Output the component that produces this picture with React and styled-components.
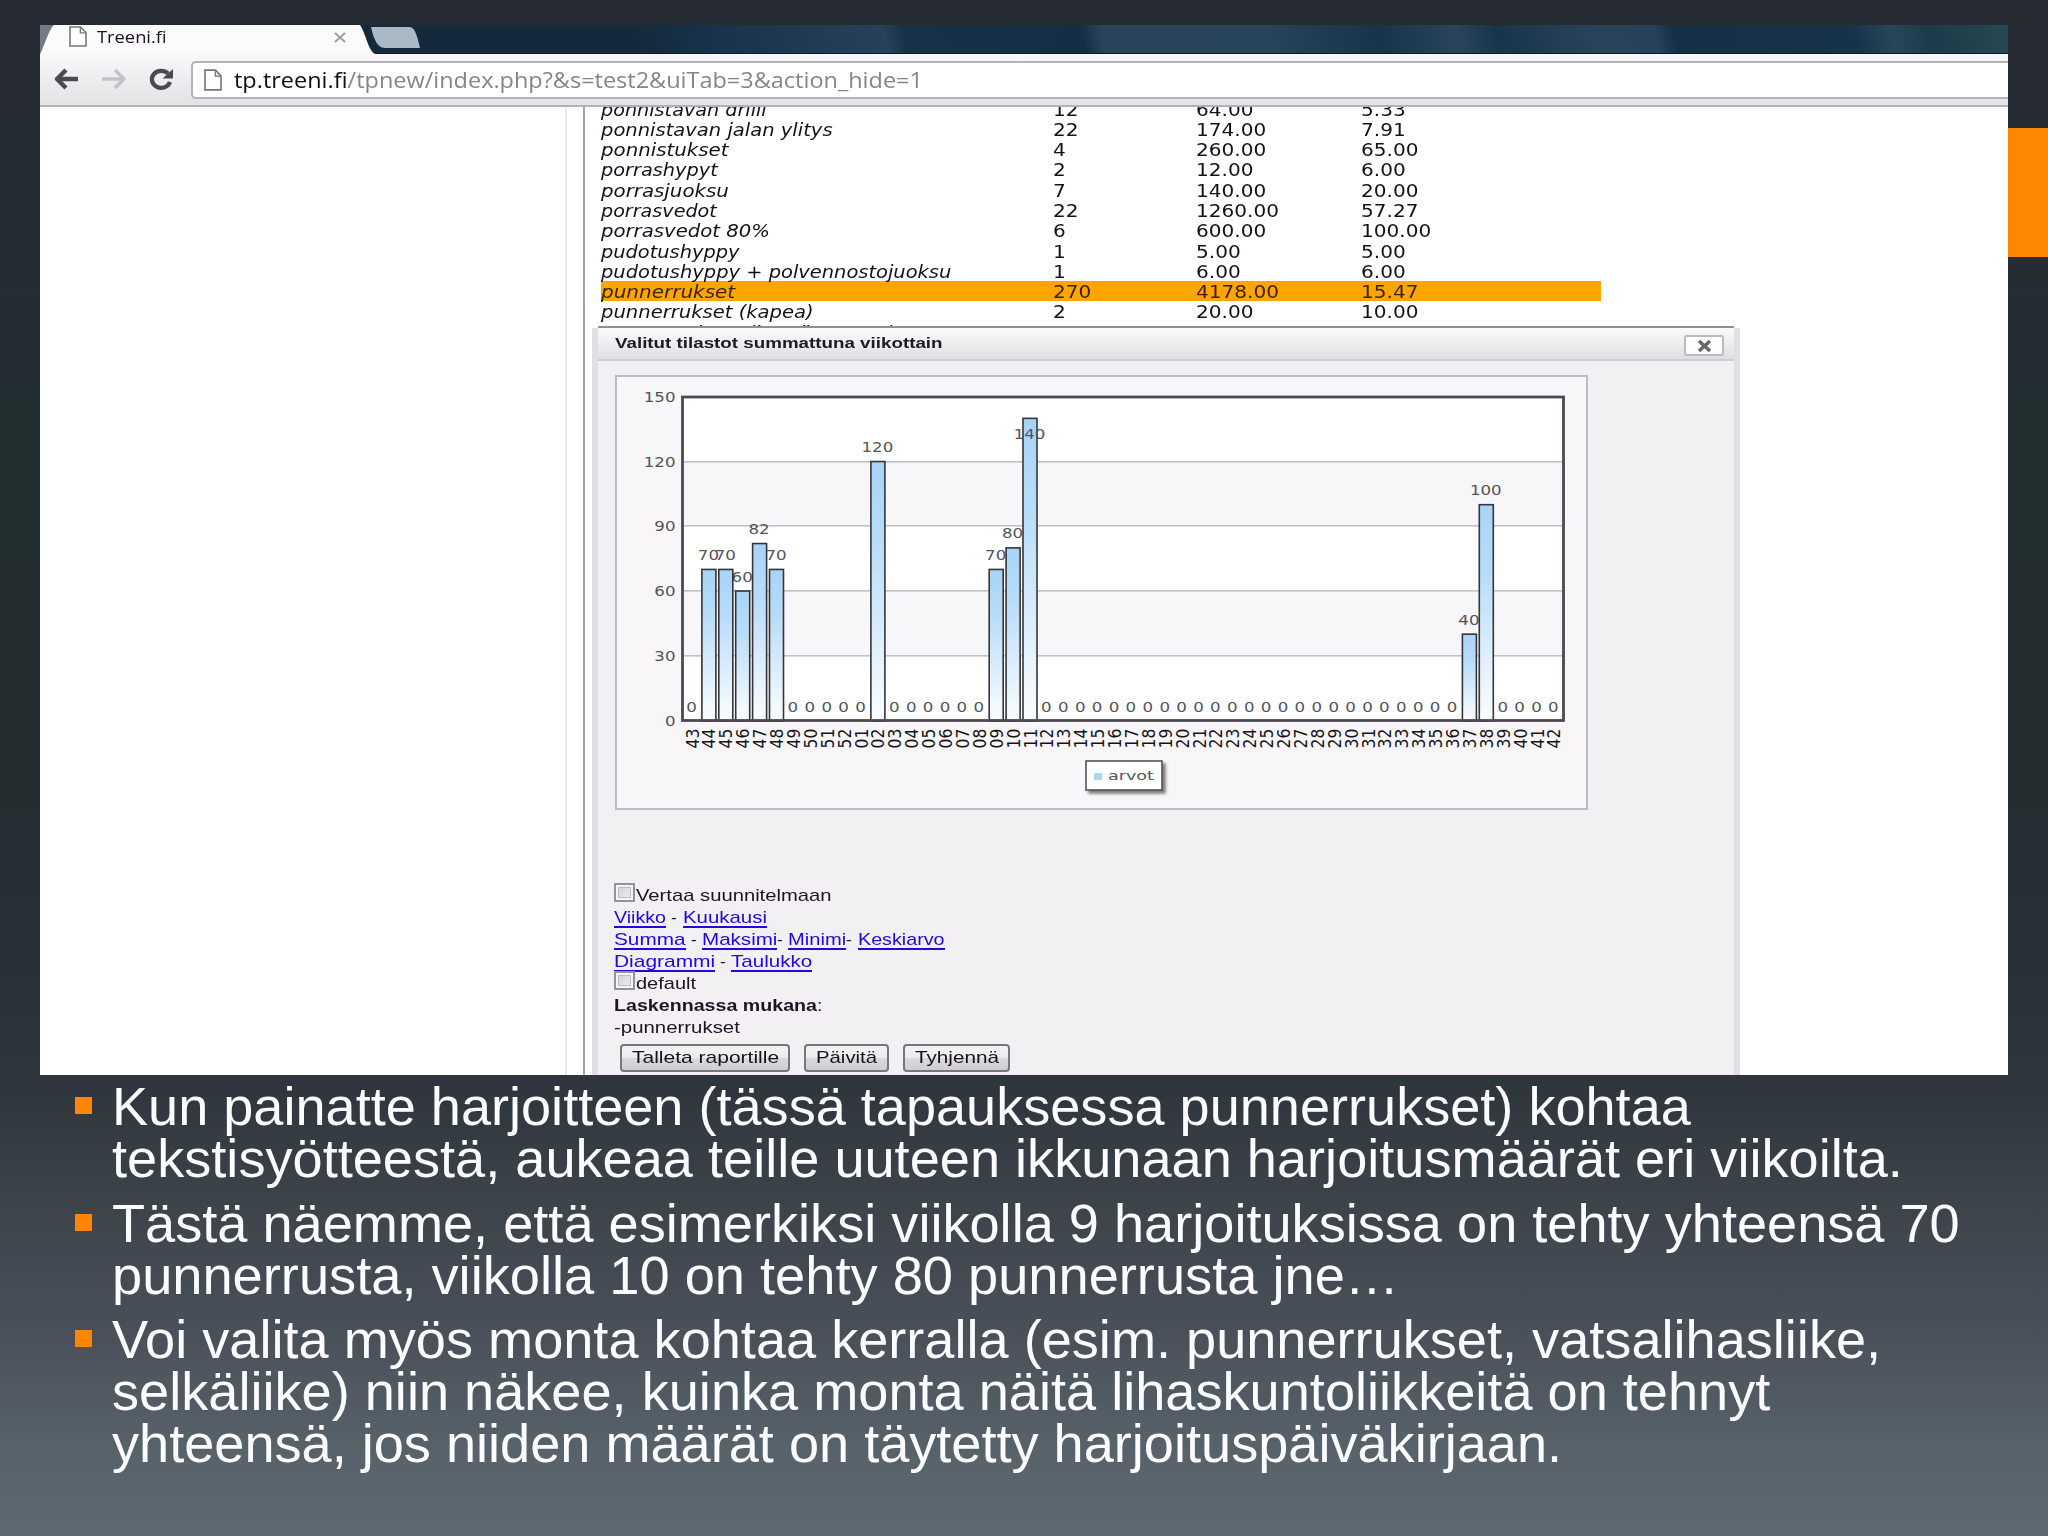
import React, { useLayoutEffect, useRef, useState } from "react";
import styled, { createGlobalStyle } from "styled-components";

const GlobalStyle = createGlobalStyle`
  * { box-sizing: border-box; }
  html, body { margin: 0; padding: 0; }
  body { width: 2048px; height: 1536px; overflow: hidden; }
`;

const ARIAL = `"Liberation Sans", Arial, sans-serif`;
const VERDANA = `"DejaVu Sans", Verdana, sans-serif`;
const SEGOE = `"Open Sans", "Noto Sans", sans-serif`;

/* Text stretched horizontally to a known width. */
const FitBox = styled.span`
  display: inline-block;
  flex: none;
  width: ${(p) => p.$w}px;
  white-space: pre;
  text-align: left;
`;
const FitInner = styled.span`
  display: inline-block;
  transform-origin: 0 50%;
`;

function Fit({ w, children }) {
  const ref = useRef(null);
  const [k, setK] = useState(1);
  useLayoutEffect(() => {
    setK(w / ref.current.offsetWidth);
  }, [w]);
  return (
    <FitBox $w={w}>
      <FitInner ref={ref} style={{ transform: `scaleX(${k})` }}>{children}</FitInner>
    </FitBox>
  );
}

const Slide = styled.main`
  position: relative;
  width: 2048px;
  height: 1536px;
  padding: 25px 40px 0;
  background: linear-gradient(180deg, #262b33 0px, #262b33 100px, #242d33 230px, #232e31 420px, #242e31 800px, #293036 960px, #2f363d 1090px, #3d434b 1200px, #4b515b 1340px, #56616a 1440px, #5f6973 1536px);
  overflow: hidden;
`;

const AccentTab = styled.div`
  position: absolute;
  left: 2008px;
  top: 128px;
  width: 40px;
  height: 129px;
  background: #ff8600;
`;

const Browser = styled.section`
  width: 1968px;
  height: 1050px;
  display: flex;
  flex-direction: column;
  background: #fff;
  overflow: hidden;
`;

const TabStrip = styled.div`
  height: 29px;
  flex: none;
  display: flex;
  background: linear-gradient(76deg, #14293b 0 30%, #17324a 34%, #28415a 43%, #183148 44%, #142e45 53%, #2a445b 54%, #29455b 62%, #17344a 68%, #2a455b 72%, #17354b 74%, #2b435a 79%, #28405a 82%, #162f46 83%, #17334a 92%, #28465a 94%, #1b3b49 96%, #264951 100%);
  border-bottom: 1px solid #0c1a26;
  position: relative;
`;

const TabShapes = styled.svg`
  position: absolute;
  left: 0;
  top: 0;
`;

const TabContent = styled.div`
  position: relative;
  display: flex;
  width: 340px;
  height: 29px;
  padding: 1px 34px 0 29px;
  align-items: flex-start;
  font: 17px/21px ${SEGOE};
  color: #1b1022;
`;
const TabTitle = styled.span`
  margin-left: 10px;
  flex: 1;
`;
const TabClose = styled.svg`
  margin-top: 6px;
`;

const Toolbar = styled.div`
  height: 53px;
  flex: none;
  display: flex;
  align-items: flex-start;
  padding: 7px 0 0 14px;
  background: linear-gradient(#f8f8fa, #e3e3e5);
  border-bottom: 2px solid #b2b2b6;
`;
const NavIcon = styled.svg`
  flex: none;
  margin: 6px ${(p) => p.$gap}px 0 0;
`;
const AddressBar = styled.div`
  flex: 1;
  height: 38px;
  display: flex;
  align-items: center;
  padding-left: 11px;
  background: #fff;
  border: 2px solid #b4b4b8;
  border-right: 0;
  border-radius: 5px 0 0 5px;
  font: 21.5px/34px ${SEGOE};
  color: #85858a;
`;
const Url = styled.span`
  margin-left: 12px;
  height: 34px;
  b { color: #101010; font-weight: 400; }
`;

const Page = styled.div`
  flex: 1;
  display: flex;
  overflow: hidden;
`;
const Gutter = styled.div`
  width: 527px;
  flex: none;
  border-right: 2px solid #ececf0;
`;
const Spacer = styled.div`
  width: 16px;
  flex: none;
`;
const Content = styled.div`
  position: relative;
  flex: 1;
  border-left: 2px solid #a3a3a7;
`;

const Table = styled.div`
  margin: -8.5px 0 0 16px;
  width: 1000px;
  font: 17px/20.3px ${VERDANA};
  color: #14101c;
`;
const Row = styled.div`
  display: grid;
  grid-template-columns: 452px 143px 165px 1fr;
  height: 20.3px;
  background: ${(p) => (p.$on ? "#ffa500" : "transparent")};
  color: ${(p) => (p.$on ? "#3a2205" : "inherit")};
  line-height: 22.3px;
  em { font-style: italic; }
`;
const Stretch = styled.span`
  display: block;
  transform: scaleX(1.18);
  transform-origin: 0 50%;
  white-space: nowrap;
`;

const Dialog = styled.div`
  position: absolute;
  left: 7px;
  top: 219px;
  width: 1148px;
  height: 760px;
  padding: 0 6px;
  background: linear-gradient(#fff 0 2px, #e0dfe3 2px);
`;
const DialogBody = styled.div`
  height: 760px;
  background: #f2f0f3;
`;
const DialogHead = styled.div`
  height: 35px;
  display: flex;
  align-items: flex-start;
  justify-content: space-between;
  padding: 6px 10px 0 17px;
  border-top: 2px solid #8f8f95;
  border-bottom: 2px solid #cdccd0;
  background: linear-gradient(#fbfbfc, #dfdee2);
  font: bold 15.5px/17px ${ARIAL};
  color: #1b1b22;
`;
const CloseButton = styled.button`
  width: 40px;
  height: 21px;
  margin-top: 1px;
  padding: 0;
  display: flex;
  align-items: center;
  justify-content: center;
  background: #fdfdfe;
  border: 2px solid #b9b9bf;
  border-radius: 3px;
`;
const ChartFrame = styled.div`
  margin: 14px 0 0 17px;
  width: 973px;
  height: 435px;
  border: 2px solid #bdbdc1;
  background: #f8f6f9;
`;
const Chart = styled.svg`
  display: block;
  margin: -2px;
`;

const Controls = styled.div`
  margin: 73px 0 0 16px;
  font: 17px/22px ${ARIAL};
  color: #1d1526;
`;
const Line = styled.div`
  display: flex;
  height: 22px;
  align-items: flex-start;
  line-height: 26px;
`;
const Gap = styled.span`
  flex: none;
  width: ${(p) => p.$w}px;
  padding-left: ${(p) => p.$in || 0}px;
`;
const Link = styled.a`
  color: #2208dd;
  border-bottom: 2px solid #2208dd;
  height: 23px;
`;
const Check = styled.span`
  flex: none;
  width: 21px;
  height: 19px;
  margin-right: 1px;
  border: 2px solid #939399;
  background: linear-gradient(135deg, #cbcdd2, #f4f4f5);
  box-shadow: inset 0 0 0 2px #f5f5f6, inset 0 0 0 3px #bbbdc2;
`;
const Buttons = styled.div`
  display: flex;
  gap: 14px;
  margin: 7px 0 0 6px;
`;
const Button = styled.button`
  width: ${(p) => p.$w}px;
  height: 28px;
  padding: 0;
  border: 2px solid #77777b;
  border-radius: 4px;
  background: linear-gradient(#f3f3f4 0, #ececee 48%, #d9d9dc 52%, #cfcfd3 100%);
  font: 17px/24px ${ARIAL};
  color: #1a1020;
`;

const Bullets = styled.ul`
  list-style: none;
  margin: 6px 0 0;
  padding: 0;
  font: 53px/52px ${ARIAL};
  color: #fafcff;
`;
const Bullet = styled.li`
  display: flex;
  gap: 20px;
  padding-left: 35px;
  margin-bottom: 12.6px;
`;
const Marker = styled.i`
  flex: none;
  width: 17px;
  height: 17px;
  margin-top: 16px;
  background: #ff8600;
`;
const Lines = styled.div`
  display: flex;
  flex-direction: column;
`;

const rows = [
  ["ponnistavan drilli", 166, "12", "64.00", "5.33"],
  ["ponnistavan jalan ylitys", 232, "22", "174.00", "7.91"],
  ["ponnistukset", 128, "4", "260.00", "65.00"],
  ["porrashypyt", 117, "2", "12.00", "6.00"],
  ["porrasjuoksu", 128, "7", "140.00", "20.00"],
  ["porrasvedot", 116, "22", "1260.00", "57.27"],
  ["porrasvedot 80%", 169, "6", "600.00", "100.00"],
  ["pudotushyppy", 139, "1", "5.00", "5.00"],
  ["pudotushyppy + polvennostojuoksu", 350, "1", "6.00", "6.00"],
  ["punnerrukset", 134, "270", "4178.00", "15.47"],
  ["punnerrukset (kapea)", 213, "2", "20.00", "10.00"],
  ["punnerrukset (leveä asento)", 295, "", "", ""],
];

const weeks = [];
for (let w = 43; w <= 52; w++) weeks.push(w);
for (let w = 1; w <= 42; w++) weeks.push(w);
const totals = { 44: 70, 45: 70, 46: 60, 47: 82, 48: 70, 2: 120, 9: 70, 10: 80, 11: 140, 37: 40, 38: 100 };

const X0 = 615;
const Y0 = 375;
const xOf = (i) => 692 - X0 + i * 16.9;
const yOf = (v) => 720.5 - Y0 - v * 2.158;

function WeekChart() {
  const bars = weeks.map((w, i) => ({ w, i, v: totals[w] || 0 }));
  const label = (b) => (
    <text
      key={"l" + b.w}
      transform={`translate(${xOf(b.i) - 0.5} ${b.v === 140 ? 64 : b.v ? yOf(b.v) - 9.5 : 337}) scale(1.25 1)`}
      textAnchor="middle"
      fontSize="13.3"
      fill="#55535a"
    >
      {b.v}
    </text>
  );
  return (
    <Chart width="973" height="435" viewBox="0 0 973 435" fontFamily={VERDANA}>
      <defs>
        <linearGradient id="bar" x1="0" y1="0" x2="0" y2="1">
          <stop offset="0" stopColor="#a9d4f6" />
          <stop offset="0.3" stopColor="#b7dcf8" />
          <stop offset="1" stopColor="#fcfdff" />
        </linearGradient>
        <filter id="shade" x="-20%" y="-20%" width="150%" height="160%">
          <feDropShadow dx="3" dy="3" stdDeviation="1.5" floodColor="#555" floodOpacity="0.75" />
        </filter>
      </defs>
      <rect x="67" y="22" width="881" height="323" fill="#fff" />
      <rect x="67" y={yOf(120)} width="881" height="64" fill="#f7f6f9" />
      <rect x="67" y={yOf(60)} width="881" height="65" fill="#f7f6f9" />
      {[120, 90, 60, 30].map((v) => (
        <rect key={v} x="67" y={Math.round(yOf(v)) - 1} width="881" height="1.6" fill="#c3c2c6" />
      ))}
      {[150, 120, 90, 60, 30, 0].map((v) => (
        <text
          key={v}
          transform={`translate(60.5 ${yOf(v) + 5}) scale(1.25 1)`}
          textAnchor="end"
          fontSize="13.3"
          fill="#55535a"
        >
          {v}
        </text>
      ))}
      {bars.filter((b) => b.v !== 140).map(label)}
      {bars.filter((b) => b.v).map((b) => (
        <rect
          key={b.w}
          x={xOf(b.i) - 7}
          y={yOf(b.v)}
          width="14"
          height={346 - yOf(b.v)}
          fill="url(#bar)"
          stroke="#35353a"
          strokeWidth="1.6"
        />
      ))}
      {bars.filter((b) => b.v === 140).map(label)}
      <rect x="67.5" y="22" width="881" height="323.5" fill="none" stroke="#4c4a50" strokeWidth="2.8" />
      {bars.map((b) => (
        <text
          key={b.w}
          transform={`translate(${xOf(b.i) + 6.5} 373.5) rotate(-90) scale(1 1.13)`}
          fontSize="15.6"
          fill="#141418"
        >
          {String(b.w).padStart(2, "0")}
        </text>
      ))}
      <rect x="471" y="386" width="76" height="29" fill="#fff" stroke="#55535a" strokeWidth="1.6" filter="url(#shade)" />
      <rect x="479" y="398" width="8" height="7" fill="#a9d6f7" />
      <text x="493" y="405" fontSize="13" fill="#55535a" textLength="46" lengthAdjust="spacingAndGlyphs">
        arvot
      </text>
    </Chart>
  );
}

const FileSvg = styled.svg`
  flex: none;
`;
const FileIcon = ({ w = 18, h = 21 }) => (
  <FileSvg width={w} height={h} viewBox="0 0 18 21" preserveAspectRatio="none">
    <path d="M1 1H11.5L17 6.5V20H1Z" fill="#fff" stroke="#77777b" strokeWidth="1.6" />
    <path d="M11.3 1V6.8H17" fill="none" stroke="#77777b" strokeWidth="1.3" />
  </FileSvg>
);

const bullets = [
  [
    ["Kun painatte harjoitteen (tässä tapauksessa punnerrukset) kohtaa", 1579],
    ["tekstisyötteestä, aukeaa teille uuteen ikkunaan harjoitusmäärät eri viikoilta.", 1791],
  ],
  [
    ["Tästä näemme, että esimerkiksi viikolla 9 harjoituksissa on tehty yhteensä 70", 1848],
    ["punnerrusta, viikolla 10 on tehty 80 punnerrusta jne…", 1287],
  ],
  [
    ["Voi valita myös monta kohtaa kerralla (esim. punnerrukset, vatsalihasliike,", 1769],
    ["selkäliike) niin näkee, kuinka monta näitä lihaskuntoliikkeitä on tehnyt", 1658],
    ["yhteensä, jos niiden määrät on täytetty harjoituspäiväkirjaan.", 1450],
  ],
];

export default function App() {
  return (
    <>
      <GlobalStyle />
      <Slide>
        <Browser>
          <TabStrip>
            <TabShapes width="400" height="29" viewBox="0 0 400 29">
              <path d="M0 0H14L0 29Z" fill="#6f7b85" />
              <path d="M0 29C4 22 9 4 14 0H320C325 6 329 29 336 29Z" fill="#fbfbfc" />
              <path d="M331 2H370C376 3 378 15 380 23H345C336 23 333 10 331 2Z" fill="#a9b9c5" />
            </TabShapes>
            <TabContent>
              <FileIcon />
              <TabTitle>
                <Fit w={70}>Treeni.fi</Fit>
              </TabTitle>
              <TabClose width="12" height="11" viewBox="0 0 12 11">
                <path d="M1 1L11 10M11 1L1 10" stroke="#a0a0a4" strokeWidth="2" />
              </TabClose>
            </TabContent>
          </TabStrip>
          <Toolbar>
            <NavIcon $gap={21} width="26" height="24" viewBox="0 0 26 24">
              <path d="M12 3L3 12L12 21M4 12H24" fill="none" stroke="#4b4b4f" strokeWidth="4.4" strokeLinejoin="round" />
            </NavIcon>
            <NavIcon $gap={21} width="26" height="24" viewBox="0 0 26 24">
              <path d="M14 3L23 12L14 21M22 12H1" fill="none" stroke="#c3c3c7" strokeWidth="3.6" strokeLinejoin="round" />
            </NavIcon>
            <NavIcon $gap={17} width="26" height="24" viewBox="0 0 26 24">
              <path d="M20 6.5A9.3 8.5 0 1 0 22 15" fill="none" stroke="#4b4b4f" strokeWidth="4.2" />
              <path d="M25 2V11.5H14.5Z" fill="#4b4b4f" />
            </NavIcon>
            <AddressBar>
              <FileIcon h={22} />
              <Url>
                <Fit w={689}>
                  <b>tp.treeni.fi</b>/tpnew/index.php?&amp;s=test2&amp;uiTab=3&amp;action_hide=1
                </Fit>
              </Url>
            </AddressBar>
          </Toolbar>
          <Page>
            <Gutter />
            <Spacer />
            <Content>
              <Table>
                {rows.map(([name, w, a, b, c]) => (
                  <Row key={name} $on={name === "punnerrukset"}>
                    <Fit w={w}>
                      <em>{name}</em>
                    </Fit>
                    <Stretch>{a}</Stretch>
                    <Stretch>{b}</Stretch>
                    <Stretch>{c}</Stretch>
                  </Row>
                ))}
              </Table>
              <Dialog>
                <DialogBody>
                  <DialogHead>
                    <Fit w={327}>Valitut tilastot summattuna viikottain</Fit>
                    <CloseButton>
                      <svg width="15" height="12" viewBox="0 0 15 12">
                        <path d="M2 1L13 11M13 1L2 11" stroke="#66666a" strokeWidth="3.4" />
                      </svg>
                    </CloseButton>
                  </DialogHead>
                  <ChartFrame>
                    <WeekChart />
                  </ChartFrame>
                  <Controls>
                    <Line>
                      <Check />
                      <Fit w={195}>Vertaa suunnitelmaan</Fit>
                    </Line>
                    <Line>
                      <Link><Fit w={52}>Viikko</Fit></Link>
                      <Gap $w={17} $in={5}>-</Gap>
                      <Link><Fit w={84}>Kuukausi</Fit></Link>
                    </Line>
                    <Line>
                      <Link><Fit w={72}>Summa</Fit></Link>
                      <Gap $w={16} $in={5}>-</Gap>
                      <Link><Fit w={75}>Maksimi</Fit></Link>
                      <Gap $w={11}>-</Gap>
                      <Link><Fit w={58}>Minimi</Fit></Link>
                      <Gap $w={12}>-</Gap>
                      <Link><Fit w={87}>Keskiarvo</Fit></Link>
                    </Line>
                    <Line>
                      <Link><Fit w={101}>Diagrammi</Fit></Link>
                      <Gap $w={16} $in={5}>-</Gap>
                      <Link><Fit w={81}>Taulukko</Fit></Link>
                    </Line>
                    <Line>
                      <Check />
                      <Fit w={60}>default</Fit>
                    </Line>
                    <Line>
                      <Fit w={209}>
                        <b>Laskennassa mukana</b>:
                      </Fit>
                    </Line>
                    <Line>
                      <Fit w={126}>-punnerrukset</Fit>
                    </Line>
                    <Buttons>
                      <Button $w={170}><Fit w={147}>Talleta raportille</Fit></Button>
                      <Button $w={85}><Fit w={61}>Päivitä</Fit></Button>
                      <Button $w={107}><Fit w={84}>Tyhjennä</Fit></Button>
                    </Buttons>
                  </Controls>
                </DialogBody>
              </Dialog>
            </Content>
          </Page>
        </Browser>
        <Bullets>
          {bullets.map((lines, i) => (
            <Bullet key={i}>
              <Marker />
              <Lines>
                {lines.map(([text, w]) => (
                  <Fit key={text} w={w}>{text}</Fit>
                ))}
              </Lines>
            </Bullet>
          ))}
        </Bullets>
        <AccentTab />
      </Slide>
    </>
  );
}
